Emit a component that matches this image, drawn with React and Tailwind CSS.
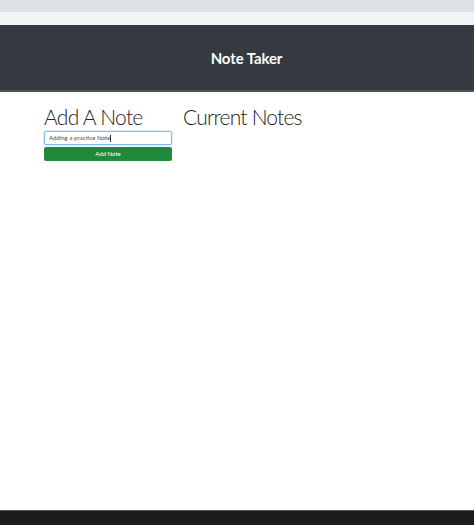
export default function App() {
  return (
    <div className="w-[474px] h-[525px] bg-white flex flex-col overflow-hidden" style={{ fontFamily: "Lato, 'Open Sans', sans-serif" }}>
      <div className="h-[12px] bg-[#dee1e5] shrink-0" />
      <div className="h-[13px] bg-[#f1f3f5] shrink-0" />
      <div className="h-[67px] bg-[#343a40] flex items-center justify-center shrink-0 border-b-2 border-[#4d5257] pl-[19px]">
        <h1 className="text-white font-bold text-[15px] leading-none tracking-[-0.1px] pt-[1px]">Note Taker</h1>
      </div>
      <div className="flex-1 flex pl-[44px] pt-[14px] gap-[11px]">
        <div className="w-[128px] flex flex-col">
          <h2 className="text-[21px] font-light leading-none tracking-[-0.7px] text-[#222] whitespace-nowrap">Add A Note</h2>
          <div className="mt-[4px] h-[14px] border border-[#80bdff] rounded-[2px] flex items-center px-[4px] shadow-[0_0_0_1px_rgba(0,123,255,0.15)]">
            <span className="text-[6px] text-[#495057] leading-none">Adding a-practice Note</span>
            <span className="w-px h-[7px] bg-[#333]" />
          </div>
          <button className="mt-[2px] h-[14px] bg-[#1f8a3b] rounded-[2px] text-white text-[6px] leading-none">Add Note</button>
        </div>
        <div className="flex flex-col">
          <h2 className="text-[21px] font-light leading-none tracking-[-0.8px] text-[#222] whitespace-nowrap">Current Notes</h2>
        </div>
      </div>
      <div className="h-[15px] bg-[#1e1d1c] border-t border-[#555] shrink-0" />
    </div>
  );
}
